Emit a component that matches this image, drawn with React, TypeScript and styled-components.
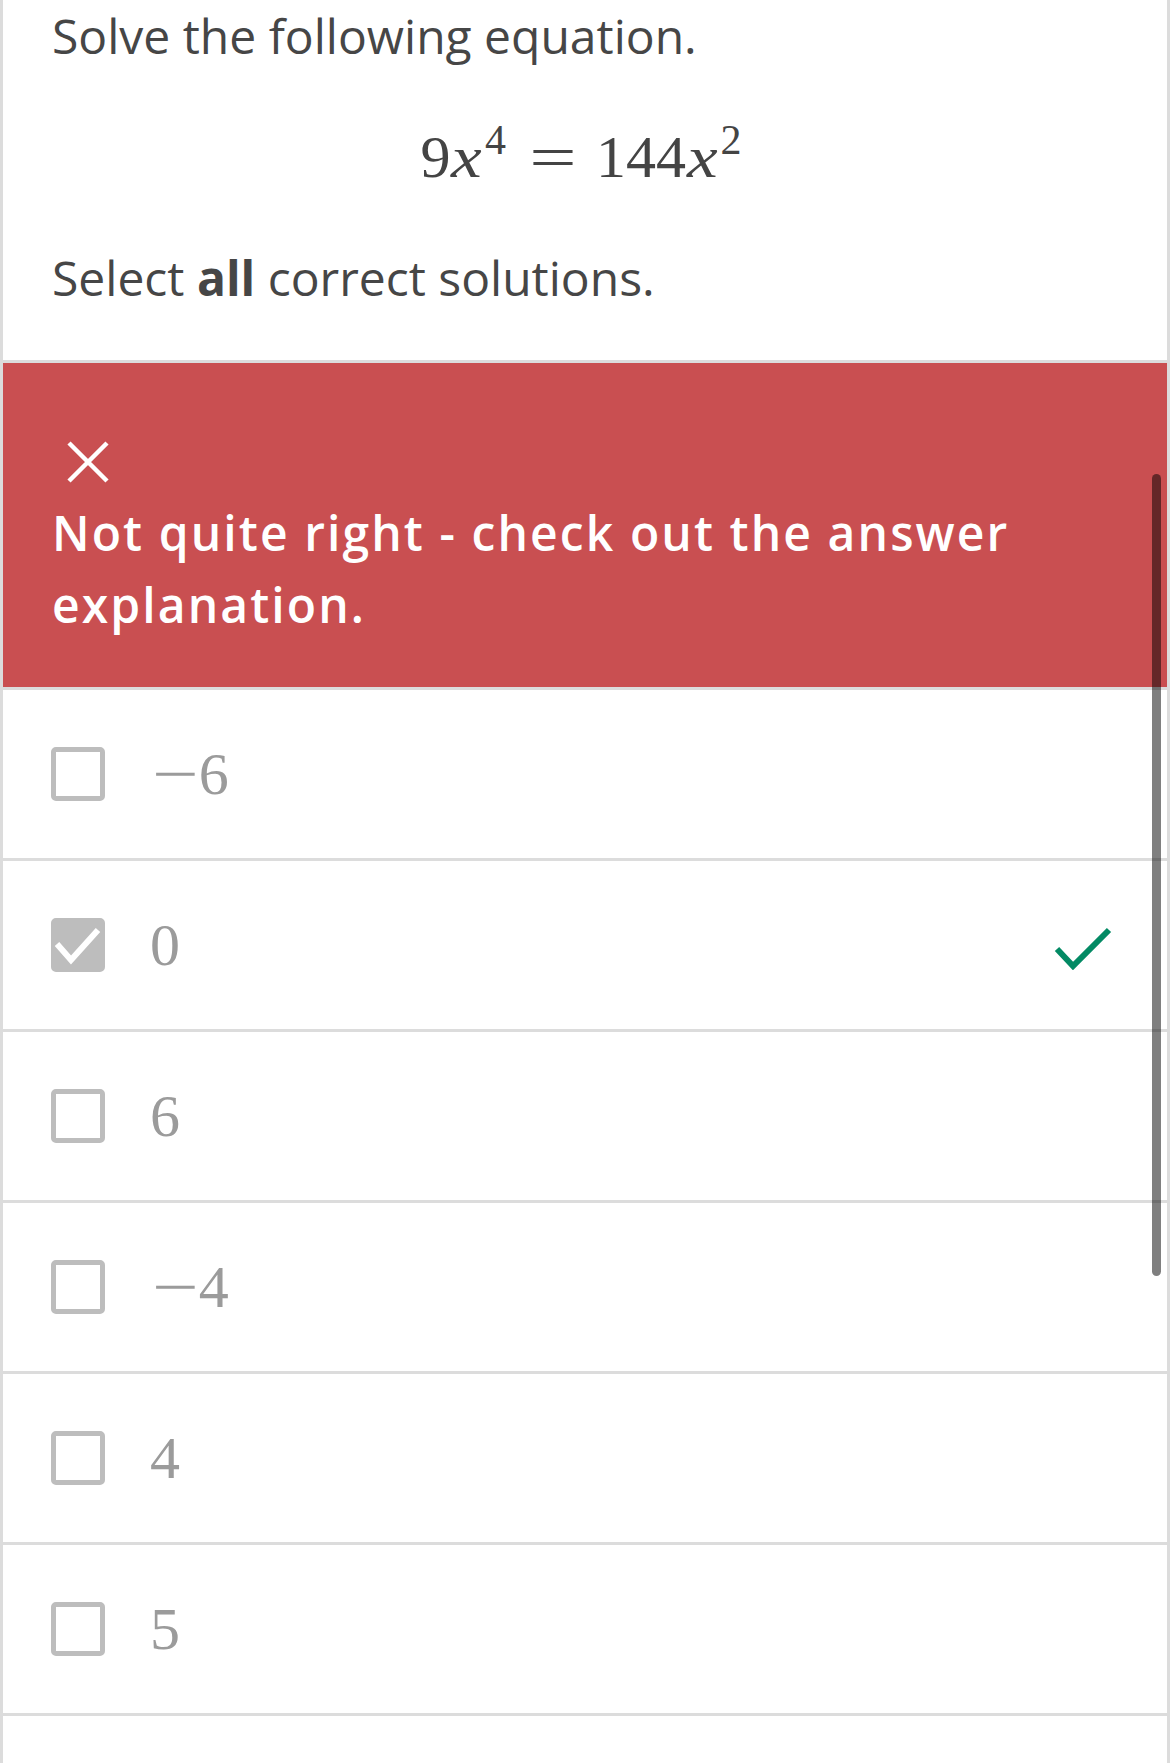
import React from "react";
import styled, { createGlobalStyle } from "styled-components";

const GlobalStyle = createGlobalStyle`
  html, body { margin: 0; padding: 0; background: #fff; }
  * { box-sizing: border-box; }
`;

const Page = styled.main`
  width: 1170px;
  min-height: 1763px;
  border-left: 3px solid #dcdcdc;
  border-right: 3px solid #dcdcdc;
  font-family: "Open Sans", sans-serif;
  background: #fff;
`;

const Question = styled.section`
  padding: 0 49px 46px;
  border-bottom: 3px solid #dcdcdc;
  color: #464646;
  font-size: 48px;
  line-height: 72px;
`;

const Para = styled.p`
  margin: 0;
`;

const Equation = styled.div`
  margin: 49px 0;
  height: 72px;
  text-align: center;
  white-space: nowrap;
  font-family: "Liberation Serif", serif;
  font-size: 60px;
  line-height: 72px;
  color: #444;
  padding-right: 8px;
`;

const MathVar = styled.span`
  display: inline-block;
  font-style: italic;
  transform: scaleX(1.15);
  transform-origin: left center;
  margin-left: 1px;
  margin-right: 7px;
`;

const Sup = styled.sup`
  font-size: 42px;
  line-height: 0;
  vertical-align: 23px;
`;

const Rel = styled.span`
  display: inline-block;
  transform: scaleX(1.4);
  margin: 0 26px 0 30px;
`;

const Banner = styled.section`
  background: #c94f51;
  color: #fff;
  padding: 78px 40px 46px 49px;
  display: flex;
  flex-direction: column;
  gap: 14px;
`;

const CrossIcon = styled.svg`
  width: 42px;
  height: 42px;
  margin-left: 15px;
  display: block;
`;

const BannerText = styled.p`
  margin: 0;
  font-size: 48px;
  line-height: 72px;
  font-weight: 600;
  letter-spacing: 2.1px;
`;

const OptionList = styled.ul`
  list-style: none;
  margin: 0;
  padding: 0;
`;

const OptionRow = styled.li`
  height: 171px;
  border-top: 3px solid #dcdcdc;
  display: flex;
  align-items: center;
  padding: 0 55px 0 48px;
  &:last-child {
    height: 174px;
    border-bottom: 3px solid #dcdcdc;
  }
`;

const Checkbox = styled.span<{ $checked: boolean }>`
  width: 54px;
  height: 54px;
  flex: none;
  border: 5px solid #bdbdbd;
  border-radius: 5px;
  background: ${(p) => (p.$checked ? "#bdbdbd" : "#fff")};
  display: flex;
`;

const BoxCheck = styled.svg`
  width: 44px;
  height: 44px;
  overflow: visible;
`;

const Value = styled.span`
  margin-left: 45px;
  font-family: "Liberation Serif", serif;
  font-size: 60px;
  line-height: 72px;
  color: #9b9b9b;
  display: flex;
  align-items: baseline;
`;

const Minus = styled.span`
  display: inline-block;
  transform: scaleX(1.38);
  transform-origin: left center;
  margin-left: 2px;
  margin-right: 13px;
`;

const CorrectMark = styled.svg`
  margin-left: auto;
  margin-top: 6px;
  width: 58px;
  height: 44px;
  display: block;
`;

const ScrollThumb = styled.div`
  position: fixed;
  top: 474px;
  left: 1152px;
  width: 9px;
  height: 802px;
  border-radius: 5px;
  background: rgba(0, 0, 0, 0.5);
`;

type Option = { value: number; checked: boolean; correct: boolean };

const options: Option[] = [
  { value: -6, checked: false, correct: false },
  { value: 0, checked: true, correct: true },
  { value: 6, checked: false, correct: false },
  { value: -4, checked: false, correct: false },
  { value: 4, checked: false, correct: false },
  { value: 5, checked: false, correct: false },
];

export default function App() {
  return (
    <>
      <GlobalStyle />
      <Page>
        <Question>
          <Para>Solve the following equation.</Para>
          <Equation>
            <span>9</span>
            <MathVar>x</MathVar>
            <Sup>4</Sup>
            <Rel>=</Rel>
            <span>144</span>
            <MathVar>x</MathVar>
            <Sup>2</Sup>
          </Equation>
          <Para>
            Select <b>all</b> correct solutions.
          </Para>
        </Question>
        <Banner>
          <CrossIcon viewBox="0 0 42 42">
            <path d="M2 2 L40 40 M40 2 L2 40" stroke="#fff" strokeWidth="4.5" fill="none" />
          </CrossIcon>
          <BannerText>Not quite right - check out the answer explanation.</BannerText>
        </Banner>
        <OptionList>
          {options.map((o) => (
            <OptionRow key={o.value}>
              <Checkbox $checked={o.checked}>
                {o.checked && (
                  <BoxCheck viewBox="0 0 44 44">
                    <path d="M1 21 L15 37 L42 7" stroke="#fff" strokeWidth="6" fill="none" />
                  </BoxCheck>
                )}
              </Checkbox>
              <Value>
                {o.value < 0 && <Minus>−</Minus>}
                <span>{Math.abs(o.value)}</span>
              </Value>
              {o.correct && (
                <CorrectMark viewBox="0 0 58 44">
                  <path d="M3 23 L19 40 L55 4" stroke="#038a64" strokeWidth="6" fill="none" />
                </CorrectMark>
              )}
            </OptionRow>
          ))}
        </OptionList>
        <ScrollThumb />
      </Page>
    </>
  );
}
